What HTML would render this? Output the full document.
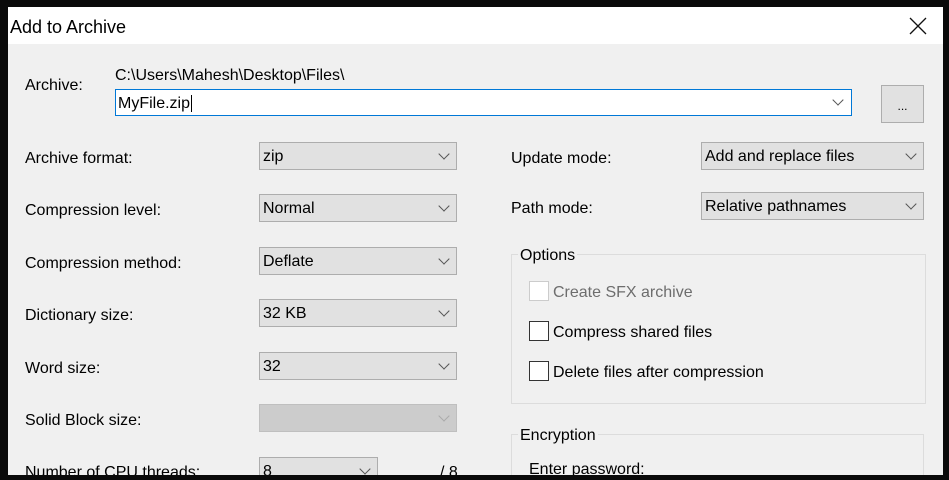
<!DOCTYPE html>
<html style="overflow:hidden;height:480px"><head><style>
body{margin:0;width:949px;height:480px;background:#0a0a0a;position:relative;overflow:hidden;font-family:"Liberation Sans",sans-serif;font-size:16px;color:#000}
.clip{position:absolute;left:0;top:0;width:949px;height:475px;overflow:hidden}
.win{position:absolute;left:8px;top:7px;width:935px;height:468px;background:#f0f0f0}
.title{position:absolute;left:0;top:0;width:935px;height:37px;background:#fff}
.a{position:absolute;white-space:nowrap}
.cb{position:absolute;height:26px;border:1px solid #adadad;background:#e1e1e1;box-sizing:content-box}
.cb span{position:absolute;left:3px;top:5px}
.cb i{position:absolute;right:8px;top:7px;width:7px;height:7px;border-right:1px solid #555;border-bottom:1px solid #555;transform:rotate(45deg);transform-origin:center}
.chk{position:absolute;width:18px;height:18px;border:1px solid #333;background:#fff}
.grp{position:absolute;border:1px solid #dcdcdc}
</style></head><body>
<div class="clip">
<div class="win">
<div class="title"><div class="a" style="left:2px;top:10px;font-size:18px">Add to Archive</div>
<svg class="a" style="left:901px;top:10px" width="18" height="18"><path d="M1 1L17 17M17 1L1 17" stroke="#111" stroke-width="1.3"/></svg></div>
</div>
<div class="a" style="left:25px;top:77px">Archive:</div>
<div class="a" style="left:115px;top:67px">C:\Users\Mahesh\Desktop\Files\</div>
<div class="a" style="left:115px;top:89px;width:735px;height:25px;border:1px solid #0078d7;background:#fff"><span class="a" style="left:2px;top:5px">MyFile.zip<span style="border-left:1px solid #000;margin-left:1px"></span></span><i class="a" style="right:9px;top:6px;width:7px;height:7px;border-right:1px solid #555;border-bottom:1px solid #555;transform:rotate(45deg)"></i></div>
<div class="a" style="left:881px;top:85px;width:41px;height:36px;border:1px solid #adadad;background:#e1e1e1;text-align:center;line-height:40px;font-size:12px">...</div>

<div class="a" style="left:25px;top:150px">Archive format:</div>
<div class="a" style="left:25px;top:202px">Compression level:</div>
<div class="a" style="left:25px;top:255px">Compression method:</div>
<div class="a" style="left:25px;top:307px">Dictionary size:</div>
<div class="a" style="left:25px;top:360px">Word size:</div>
<div class="a" style="left:25px;top:412px">Solid Block size:</div>
<div class="a" style="left:25px;top:458px;height:17px;overflow:hidden;padding-top:6px;box-sizing:border-box">Number of CPU threads:</div>
<div class="cb" style="left:259px;top:142px;width:196px"><span>zip</span><i></i></div>
<div class="cb" style="left:259px;top:194px;width:196px"><span>Normal</span><i></i></div>
<div class="cb" style="left:259px;top:247px;width:196px"><span>Deflate</span><i></i></div>
<div class="cb" style="left:259px;top:299px;width:196px"><span>32 KB</span><i></i></div>
<div class="cb" style="left:259px;top:352px;width:196px"><span>32</span><i></i></div>
<div class="cb" style="left:259px;top:404px;width:196px;background:#ccc;border-color:#bfbfbf"><i style="border-color:#aaa"></i></div>
<div class="cb" style="left:259px;top:457px;width:117px;height:17px;border-bottom:0;overflow:hidden"><span>8</span><i></i></div>
<div class="a" style="left:440px;top:458px;height:17px;overflow:hidden;padding-top:6px;box-sizing:border-box">/ 8</div>

<div class="a" style="left:511px;top:150px">Update mode:</div>
<div class="a" style="left:511px;top:200px">Path mode:</div>
<div class="cb" style="left:701px;top:142px;width:221px"><span>Add and replace files</span><i></i></div>
<div class="cb" style="left:701px;top:192px;width:221px"><span>Relative pathnames</span><i></i></div>

<div class="grp" style="left:511px;top:254px;width:413px;height:148px"></div>
<div class="a" style="left:518px;top:247px;background:#f0f0f0;padding:0 2px">Options</div>
<div class="chk" style="left:529px;top:281px;border-color:#ccc"></div>
<div class="a" style="left:553px;top:284px;color:#6d6d6d">Create SFX archive</div>
<div class="chk" style="left:529px;top:321px"></div>
<div class="a" style="left:553px;top:324px">Compress shared files</div>
<div class="chk" style="left:529px;top:361px"></div>
<div class="a" style="left:553px;top:364px">Delete files after compression</div>

<div class="a" style="left:511px;top:434px;width:413px;height:41px;border:1px solid #dcdcdc;border-bottom:0;box-sizing:border-box"></div>
<div class="a" style="left:518px;top:427px;background:#f0f0f0;padding:0 2px">Encryption</div>
<div class="a" style="left:529px;top:458px;height:17px;overflow:hidden;padding-top:3px;box-sizing:border-box">Enter password:</div>
</div>
<div class="a" style="left:943px;top:0;width:6px;height:480px;background:#0a0a0a"></div>
</body></html>
